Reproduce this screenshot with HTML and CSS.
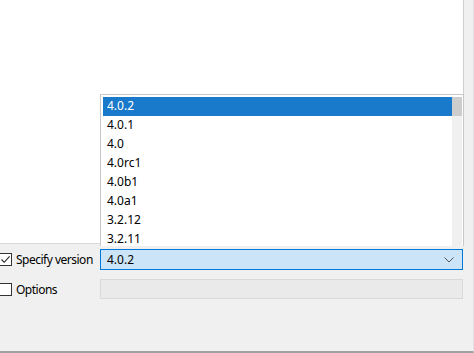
FILE: index.html
```html
<!DOCTYPE html>
<html lang="en">
  <head>
    <meta charset="UTF-8" />
    <title>Version</title>
    <link rel="stylesheet" href="styles.css">
  </head>
  <body>
    <div class="window">
      <div class="panel"></div>
      <div class="form">
        <div class="row">
          <label class="check"><span class="box checked">
            <svg width="11" height="11" viewBox="0 0 11 11"><path d="M1.5 5.5 L4.2 8.3 L9.6 2.4" fill="none" stroke="#222" stroke-width="1.1"/></svg>
          </span>Specify version</label>
          <div class="combo">
            <span>4.0.2</span>
            <svg class="chev" width="10" height="6" viewBox="0 0 10 6"><path d="M0.5 0.5 L5 5 L9.5 0.5" fill="none" stroke="#555" stroke-width="1"/></svg>
          </div>
        </div>
        <div class="row row2">
          <label class="check"><span class="box"></span>Options</label>
          <div class="field disabled"></div>
        </div>
      </div>
      <!-- dropdown popup of the combo -->
      <div class="popup">
        <ul class="list">
          <li class="current">4.0.2</li>
          <li>4.0.1</li>
          <li>4.0</li>
          <li>4.0rc1</li>
          <li>4.0b1</li>
          <li>4.0a1</li>
          <li>3.2.12</li>
          <li>3.2.11</li>
        </ul>
        <div class="scroll"><div class="thumb"></div></div>
      </div>
    </div>
  </body>
</html>
```

FILE: styles.css
```css
* {
  margin: 0;
  padding: 0;
  box-sizing: border-box;
}

li {
  list-style-type: none;
}

body {
  width: 474px;
  height: 353px;
  overflow: hidden;
  background-color: #f0f0f0;
  font-family: "Noto Sans", "Open Sans", sans-serif;
  font-size: 12px;
  color: #000;
}

.window {
  position: relative;
  height: 353px;
  border-bottom: 2px solid #a0a0a0;
  border-right: 1px solid #e2e2e2;
}

.panel {
  width: 464px;
  height: 244px;
  background-color: #fff;
  border-right: 1px solid #cfcfcf;
  border-bottom: 1px solid #dadada;
}

.form {
  padding-top: 5px;
}

.row {
  display: flex;
  align-items: center;
  height: 21px;
}

.row2 {
  margin-top: 9px;
  height: 20px;
}

.check {
  display: flex;
  align-items: center;
  width: 101px;
  height: 100%;
  margin-left: -1px;
  letter-spacing: -0.5px;
  white-space: nowrap;
}

.box {
  display: flex;
  align-items: center;
  justify-content: center;
  width: 13px;
  height: 13px;
  margin-right: 4px;
  border: 1px solid #333;
  background-color: #fff;
}

.combo {
  display: flex;
  align-items: center;
  justify-content: space-between;
  width: 363px;
  height: 21px;
  padding: 0 8px 0 6px;
  background-color: #cce4f7;
  border: 1px solid #0078d7;
}

.field {
  width: 363px;
  height: 20px;
}

.disabled {
  background-color: #eaeaea;
  border: 1px solid #d9d9d9;
}

.popup {
  position: absolute;
  left: 100px;
  top: 94px;
  width: 364px;
  height: 152px;
  display: flex;
  padding: 2px 1px 0 2px;
  background-color: #fff;
  border: 1px solid #c8c8c8;
  border-bottom: none;
  overflow: hidden;
}

.list {
  flex: 1;
}

.list li {
  height: 19px;
  line-height: 18px;
  padding-left: 4px;
}

.list .current {
  background-color: #1979ca;
  color: #fff;
}

.scroll {
  width: 10px;
  background-color: #f0f0f0;
}

.thumb {
  height: 19px;
  background-color: #cdcdcd;
}
```
